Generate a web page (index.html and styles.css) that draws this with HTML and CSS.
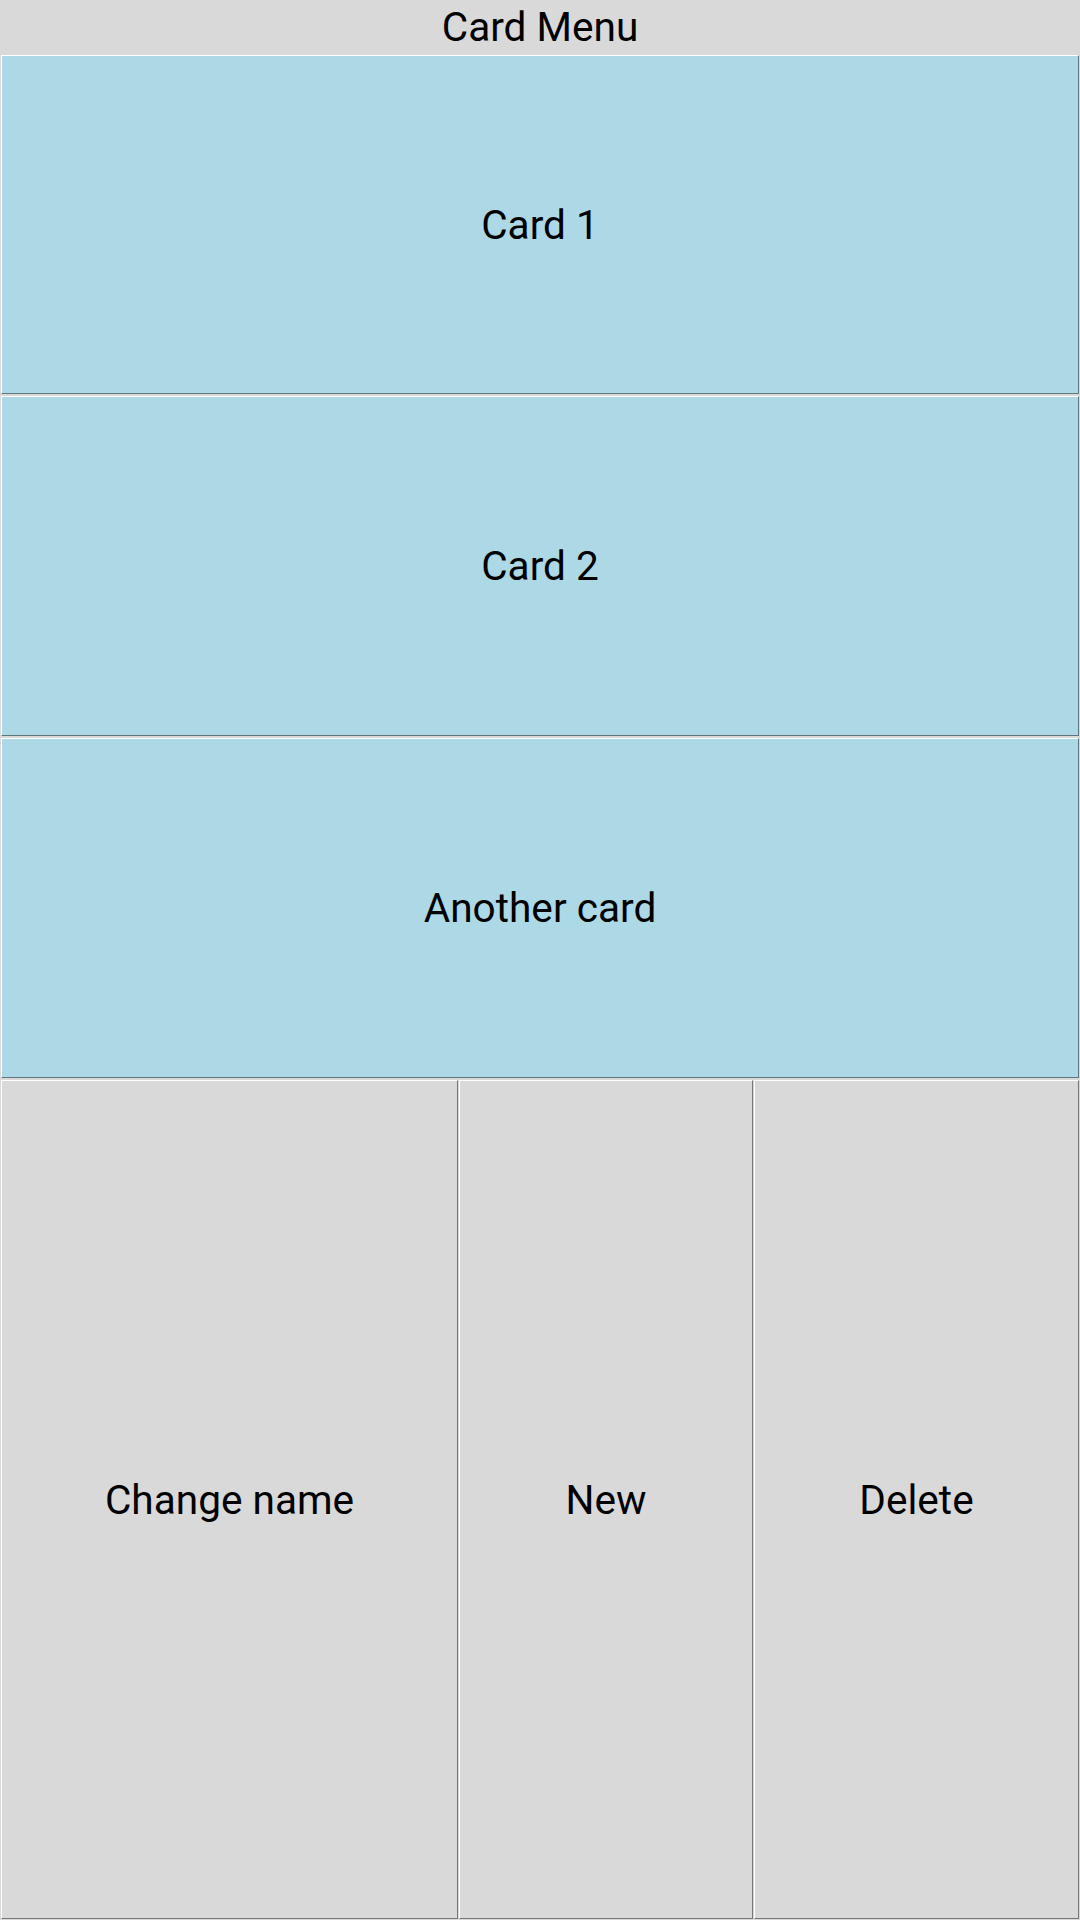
FILE: index.html
```html
<!DOCTYPE html>
<html lang="en">
<head>
<meta charset="utf-8">
<title>Card Menu</title>
<link rel="stylesheet" href="styles.css">
</head>
<body>
<div class="app">
  <header class="title">Card Menu</header>
  <main class="content">
    <button class="tile card card-a">Card 1</button>
    <button class="tile card card-b">Card 2</button>
    <button class="tile card card-c">Another card</button>
    <div class="actions">
      <button class="tile action">Change name</button>
      <button class="tile action">New</button>
      <button class="tile action">Delete</button>
    </div>
  </main>
</div>
</body>
</html>
```

FILE: styles.css
```css
html, body {
  margin: 0;
  padding: 0;
  background: #d9d9d9;
}

.app {
  width: 1080px;
  height: 1920px;
  display: flex;
  flex-direction: column;
  padding: 0 1px 1px 1px;
  box-sizing: border-box;
  font-family: Roboto, "Noto Sans", sans-serif;
  color: #000;
}

.title {
  height: 55px;
  flex: none;
  display: flex;
  align-items: center;
  justify-content: center;
  font-size: 40.6px;
  line-height: 1;
  box-sizing: border-box;
}

.content {
  flex: 1;
  display: flex;
  flex-direction: column;
  gap: 2px;
}

.tile {
  margin: 0;
  padding: 0;
  font: inherit;
  font-size: 40.6px;
  color: #000;
  display: flex;
  align-items: center;
  justify-content: center;
  border-style: solid;
  border-width: 1px;
  border-color: #ffffff rgba(0, 0, 0, 0.45) rgba(0, 0, 0, 0.45) #ffffff;
  box-sizing: border-box;
  cursor: pointer;
}

.card {
  background: #add8e6;
  width: 100%;
}

.card-a { height: 339px; }
.card-b { height: 340px; }
.card-c { height: 340px; }

.actions {
  flex: 1;
  display: grid;
  grid-template-columns: 457fr 294fr 325fr;
  column-gap: 1px;
}

.action {
  background: #d9d9d9;
  height: 100%;
}
```
